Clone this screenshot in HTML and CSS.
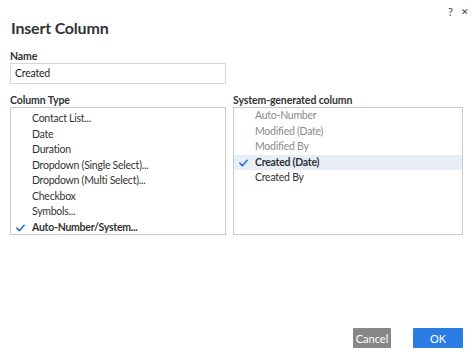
FILE: index.html
```html
<!DOCTYPE html>
<html>
<head>
<meta charset="utf-8">
<link rel="stylesheet" href="styles.css">
</head>
<body>
<div class="dialog">
  <div class="topbar">
    <span class="tool">?</span>
    <span class="tool close">&#x2715;</span>
  </div>
  <h1 class="title">Insert Column</h1>
  <div class="field">
    <div class="label">Name</div>
    <div class="input">Created</div>
  </div>
  <div class="columns">
    <div class="col">
      <div class="label">Column Type</div>
      <ul class="list list-left">
        <li>Contact List...</li>
        <li>Date</li>
        <li>Duration</li>
        <li>Dropdown (Single Select)...</li>
        <li>Dropdown (Multi Select)...</li>
        <li>Checkbox</li>
        <li>Symbols...</li>
        <li class="checked"><svg class="check" viewBox="0 0 10 8"><path d="M1 4.2 L3.8 7 L9 1" fill="none" stroke="#2a6fd6" stroke-width="1.8" stroke-linecap="round" stroke-linejoin="round"/></svg>Auto-Number/System...</li>
      </ul>
    </div>
    <div class="col col-right">
      <div class="label">System-generated column</div>
      <ul class="list list-right">
        <li class="muted">Auto-Number</li>
        <li class="muted">Modified (Date)</li>
        <li class="muted">Modified By</li>
        <li class="checked selected"><svg class="check" viewBox="0 0 10 8"><path d="M1 4.2 L3.8 7 L9 1" fill="none" stroke="#2a6fd6" stroke-width="1.8" stroke-linecap="round" stroke-linejoin="round"/></svg>Created (Date)</li>
        <li>Created By</li>
      </ul>
    </div>
  </div>
  <div class="footer">
    <button class="btn btn-cancel">Cancel</button>
    <button class="btn btn-ok">OK</button>
  </div>
</div>
</body>
</html>
```
FILE: styles.css
```css
* { box-sizing: border-box; }
html, body { margin: 0; padding: 0; background: #fff; }
body {
  font-family: Lato, "Noto Sans", sans-serif;
  color: #333;
  width: 474px;
  height: 361px;
  overflow: hidden;
}
.dialog {
  padding: 0 11px 0 10px;
  height: 361px;
  display: flex;
  flex-direction: column;
}
.topbar {
  height: 17px;
  display: flex;
  justify-content: flex-end;
  align-items: flex-end;
  gap: 8px;
  margin-right: -6px;
}
.tool {
  font-size: 11px;
  line-height: 11px;
  color: #444;
}
.close { font-size: 9px; line-height: 10px; }
.title {
  margin: 1px 0 0 0;
  font-size: 16px;
  font-weight: 700;
  line-height: 20px;
  color: #333;
  padding-left: 1px;
  letter-spacing: -0.2px;
}
.field { margin-top: 12px; }
.label {
  font-size: 10.5px;
  font-weight: 700;
  line-height: 12px;
  color: #333;
  margin-bottom: 1px;
  letter-spacing: -0.1px;
}
.input {
  width: 216px;
  height: 21px;
  border: 1px solid #d6d6d6;
  font-size: 10.5px;
  line-height: 19px;
  padding-left: 4px;
  color: #222;
  letter-spacing: -0.2px;
}
.columns {
  display: flex;
  margin-top: 10px;
}
.col { width: 216px; }
.col-right { margin-left: 7px; width: 230px; }
.list {
  list-style: none;
  margin: 0;
  padding: 0;
  border: 1px solid #c9c9c9;
  height: 128px;
  font-size: 10.5px;
  letter-spacing: -0.25px;
  color: #333;
}
.list li {
  height: 15.5px;
  line-height: 15.5px;
  position: relative;
  padding-left: 21px;
  white-space: nowrap;
}
.list-left { padding-top: 3px; }
.list-right { padding-top: 0; }
.list .muted { color: #8a8a8a; }
.list .checked { font-weight: 700; }
.list .selected { background: #e8eef8; }
.check {
  position: absolute;
  left: 5px;
  top: 4px;
  width: 9px;
  height: 8px;
}
.footer {
  margin-top: auto;
  margin-bottom: 13px;
  display: flex;
  justify-content: flex-end;
  gap: 22px;
}
.btn {
  border: none;
  height: 20px;
  font-family: inherit;
  font-size: 11px;
  color: #fff;
  padding: 0;
  border-radius: 1px;
}
.btn-cancel { width: 38px; background: #878787; }
.btn-ok { width: 50px; background: #2b7de3; }
```
